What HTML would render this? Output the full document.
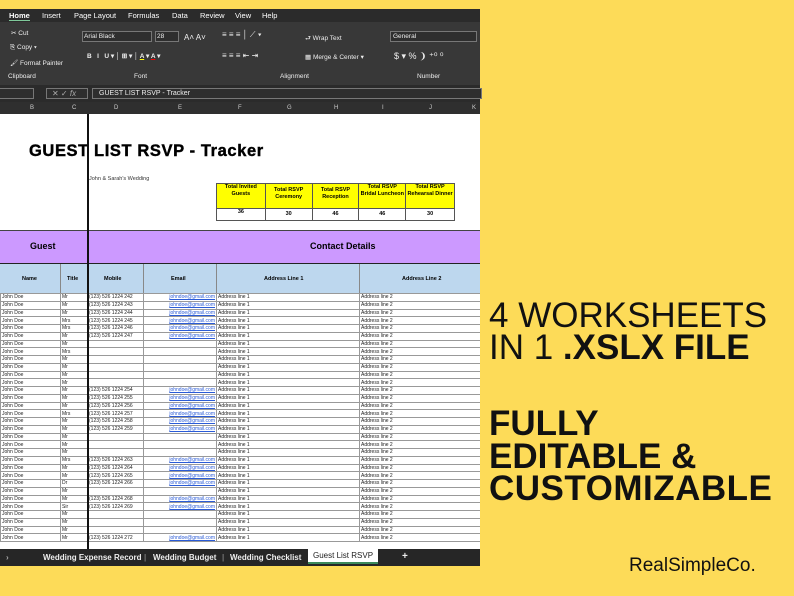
<!DOCTYPE html>
<html><head><meta charset="utf-8"><style>
*{margin:0;padding:0;box-sizing:border-box}
body{width:794px;height:596px;background:#fddb58;position:relative;overflow:hidden;font-family:"Liberation Sans",Arial,sans-serif}
.a{position:absolute}
.tabs{left:0;top:9px;width:480px;height:13px;background:#2b2b2b;color:#fff;font-size:7.5px}
.tabs span{position:absolute;top:2px}
.rib{left:0;top:22px;width:480px;height:63px;background:#383838;color:#eee;font-size:6.5px}
.rib span{position:absolute;white-space:nowrap}
.box{position:absolute;border:1px solid #777;background:#2e2e2e;height:11px}
.fb{left:0;top:85px;width:480px;height:17px;background:#2b2b2b}
.ch{left:0;top:102px;width:480px;height:12px;background:#2f2f2f;color:#ccc;font-size:6px}
.ch span{position:absolute;top:3px}
.sheet{left:0;top:114px;width:480px;height:435px;background:#fff;overflow:hidden}
table{border-collapse:collapse;table-layout:fixed;position:absolute;left:0;top:179px;width:480px}
td{border:1px solid #999;height:7.75px;font-size:5px;line-height:6px;padding:0 1px;white-space:nowrap;overflow:hidden;color:#222}
td.e{color:#2a5bd7;text-decoration:underline;text-align:right}
.st{left:0;top:549px;width:480px;height:17px;background:#262626;color:#eee;font-size:8px;font-weight:bold}
.st span{position:absolute;top:4px;white-space:nowrap}
.big{left:489px;font-size:35px;color:#111;line-height:33px;white-space:nowrap;letter-spacing:0}
</style></head><body>
<div class="a tabs"><span style="left:9px;border-bottom:1px solid #7fc99a;font-weight:bold">Home</span><span style="left:42px">Insert</span><span style="left:74px">Page Layout</span><span style="left:128px">Formulas</span><span style="left:172px">Data</span><span style="left:200px">Review</span><span style="left:235px">View</span><span style="left:262px">Help</span></div>
<div class="a rib">
<span style="left:11px;top:7px">✂ Cut</span><span style="left:10px;top:22px">⎘ Copy ▾</span><span style="left:10px;top:37px">🖌 Format Painter</span><span style="left:8px;top:51px">Clipboard</span>
<div class="box" style="left:82px;top:9px;width:70px"></div><span style="left:84px;top:11px">Arial Black</span><div class="box" style="left:155px;top:9px;width:24px"></div><span style="left:157px;top:11px">28</span><span style="left:184px;top:11px;font-size:8px">A˄ A˅</span>
<span style="left:87px;top:30px;font-weight:bold">B &nbsp; I &nbsp; U ▾ │ ⊞ ▾ │ <u style="text-decoration-color:#ff0">A</u> ▾ <u style="text-decoration-color:#e00">A</u> ▾</span><span style="left:134px;top:51px">Font</span>
<span style="left:222px;top:8px;font-size:8px">≡ ≡ ≡ │ ⟋ ▾</span><span style="left:222px;top:29px;font-size:8px">≡ ≡ ≡ ⇤ ⇥</span>
<span style="left:305px;top:12px">⮐ Wrap Text</span><span style="left:305px;top:31px">▦ Merge &amp; Center ▾</span><span style="left:280px;top:51px">Alignment</span>
<div class="box" style="left:390px;top:9px;width:87px"></div><span style="left:393px;top:11px">General</span><span style="left:394px;top:29px;font-size:9px">$ ▾ % ❩ ⁺⁰ ⁰</span><span style="left:417px;top:51px">Number</span>
</div>
<div class="a fb"><div class="box" style="left:-2px;top:3px;width:36px"></div><div class="box" style="left:46px;top:3px;width:42px"></div><span class="a" style="left:52px;top:4px;color:#aaa;font-size:8px">✕ ✓ <i>fx</i></span><div class="box" style="left:92px;top:3px;width:390px"></div><span class="a" style="left:99px;top:5px;color:#eee;font-size:7px">GUEST LIST RSVP - Tracker</span></div>
<div class="a ch"><span style="left:30px">B</span><span style="left:72px">C</span><span style="left:114px">D</span><span style="left:178px">E</span><span style="left:238px">F</span><span style="left:287px">G</span><span style="left:334px">H</span><span style="left:382px">I</span><span style="left:429px">J</span><span style="left:472px">K</span></div>
<div class="a sheet">
<div class="a" style="left:29px;top:28px;font-size:16.5px;font-weight:900;color:#000;letter-spacing:.6px;-webkit-text-stroke:0.4px #000">GUEST LIST RSVP - Tracker</div>
<div class="a" style="left:89px;top:62px;font-size:5.5px;color:#333">John &amp; Sarah's Wedding</div>
<div class="a" style="left:216px;top:69px;width:239px;height:38px;border:1px solid #555;display:flex;font-size:5.5px;font-weight:bold;text-align:center;line-height:7px">
<div style="flex:49;border-right:1px solid #555"><div style="background:#ffff00;height:25px;border-bottom:1px solid #555">Total Invited Guests</div><div>36</div></div>
<div style="flex:47;border-right:1px solid #555"><div style="background:#ffff00;height:25px;border-bottom:1px solid #555;padding-top:3px">Total RSVP Ceremony</div><div style="padding-top:2px">30</div></div>
<div style="flex:47;border-right:1px solid #555"><div style="background:#ffff00;height:25px;border-bottom:1px solid #555;padding-top:3px">Total RSVP Reception</div><div style="padding-top:2px">46</div></div>
<div style="flex:47;border-right:1px solid #555"><div style="background:#ffff00;height:25px;border-bottom:1px solid #555">Total RSVP Bridal Luncheon</div><div style="padding-top:2px">46</div></div>
<div style="flex:49"><div style="background:#ffff00;height:25px;border-bottom:1px solid #555">Total RSVP Rehearsal Dinner</div><div style="padding-top:2px">30</div></div>
</div>
<div class="a" style="left:0;top:116px;width:480px;height:34px;background:#cc99ff;border-top:1px solid #444;border-bottom:1px solid #222"></div>
<div class="a" style="left:30px;top:127px;font-size:9px;font-weight:900">Guest</div>
<div class="a" style="left:310px;top:127px;font-size:9px;font-weight:900">Contact Details</div>
<div class="a" style="left:0;top:150px;width:480px;height:29px;background:#bdd7ee;font-size:5.5px;font-weight:bold">
<span class="a" style="left:22px;top:12px">Name</span><span class="a" style="left:67px;top:12px">Title</span><span class="a" style="left:104px;top:12px">Mobile</span><span class="a" style="left:171px;top:12px">Email</span><span class="a" style="left:264px;top:12px">Address Line 1</span><span class="a" style="left:402px;top:12px">Address Line 2</span>
<div class="a" style="left:60px;top:0;width:1px;height:29px;background:#888"></div><div class="a" style="left:143px;top:0;width:1px;height:29px;background:#888"></div><div class="a" style="left:216px;top:0;width:1px;height:29px;background:#888"></div><div class="a" style="left:359px;top:0;width:1px;height:29px;background:#888"></div></div>
<table>
<colgroup><col style="width:60px"><col style="width:27px"><col style="width:56px"><col style="width:73px"><col style="width:143px"><col style="width:121px"></colgroup>
<tr><td>John Doe</td><td>Mr</td><td>(123) 526 1224 242</td><td class="e">johndoe@gmail.com</td><td>Address line 1</td><td>Address line 2</td></tr>
<tr><td>John Doe</td><td>Mr</td><td>(123) 526 1224 243</td><td class="e">johndoe@gmail.com</td><td>Address line 1</td><td>Address line 2</td></tr>
<tr><td>John Doe</td><td>Mr</td><td>(123) 526 1224 244</td><td class="e">johndoe@gmail.com</td><td>Address line 1</td><td>Address line 2</td></tr>
<tr><td>John Doe</td><td>Mrs</td><td>(123) 526 1224 245</td><td class="e">johndoe@gmail.com</td><td>Address line 1</td><td>Address line 2</td></tr>
<tr><td>John Doe</td><td>Mrs</td><td>(123) 526 1224 246</td><td class="e">johndoe@gmail.com</td><td>Address line 1</td><td>Address line 2</td></tr>
<tr><td>John Doe</td><td>Mr</td><td>(123) 526 1224 247</td><td class="e">johndoe@gmail.com</td><td>Address line 1</td><td>Address line 2</td></tr>
<tr><td>John Doe</td><td>Mr</td><td></td><td></td><td>Address line 1</td><td>Address line 2</td></tr>
<tr><td>John Doe</td><td>Mrs</td><td></td><td></td><td>Address line 1</td><td>Address line 2</td></tr>
<tr><td>John Doe</td><td>Mr</td><td></td><td></td><td>Address line 1</td><td>Address line 2</td></tr>
<tr><td>John Doe</td><td>Mr</td><td></td><td></td><td>Address line 1</td><td>Address line 2</td></tr>
<tr><td>John Doe</td><td>Mr</td><td></td><td></td><td>Address line 1</td><td>Address line 2</td></tr>
<tr><td>John Doe</td><td>Mr</td><td></td><td></td><td>Address line 1</td><td>Address line 2</td></tr>
<tr><td>John Doe</td><td>Mr</td><td>(123) 526 1224 254</td><td class="e">johndoe@gmail.com</td><td>Address line 1</td><td>Address line 2</td></tr>
<tr><td>John Doe</td><td>Mr</td><td>(123) 526 1224 255</td><td class="e">johndoe@gmail.com</td><td>Address line 1</td><td>Address line 2</td></tr>
<tr><td>John Doe</td><td>Mr</td><td>(123) 526 1224 256</td><td class="e">johndoe@gmail.com</td><td>Address line 1</td><td>Address line 2</td></tr>
<tr><td>John Doe</td><td>Mrs</td><td>(123) 526 1224 257</td><td class="e">johndoe@gmail.com</td><td>Address line 1</td><td>Address line 2</td></tr>
<tr><td>John Doe</td><td>Mr</td><td>(123) 526 1224 258</td><td class="e">johndoe@gmail.com</td><td>Address line 1</td><td>Address line 2</td></tr>
<tr><td>John Doe</td><td>Mr</td><td>(123) 526 1224 259</td><td class="e">johndoe@gmail.com</td><td>Address line 1</td><td>Address line 2</td></tr>
<tr><td>John Doe</td><td>Mr</td><td></td><td></td><td>Address line 1</td><td>Address line 2</td></tr>
<tr><td>John Doe</td><td>Mr</td><td></td><td></td><td>Address line 1</td><td>Address line 2</td></tr>
<tr><td>John Doe</td><td>Mr</td><td></td><td></td><td>Address line 1</td><td>Address line 2</td></tr>
<tr><td>John Doe</td><td>Mrs</td><td>(123) 526 1224 263</td><td class="e">johndoe@gmail.com</td><td>Address line 1</td><td>Address line 2</td></tr>
<tr><td>John Doe</td><td>Mr</td><td>(123) 526 1224 264</td><td class="e">johndoe@gmail.com</td><td>Address line 1</td><td>Address line 2</td></tr>
<tr><td>John Doe</td><td>Mr</td><td>(123) 526 1224 265</td><td class="e">johndoe@gmail.com</td><td>Address line 1</td><td>Address line 2</td></tr>
<tr><td>John Doe</td><td>Dr</td><td>(123) 526 1224 266</td><td class="e">johndoe@gmail.com</td><td>Address line 1</td><td>Address line 2</td></tr>
<tr><td>John Doe</td><td>Mr</td><td></td><td></td><td>Address line 1</td><td>Address line 2</td></tr>
<tr><td>John Doe</td><td>Mr</td><td>(123) 526 1224 268</td><td class="e">johndoe@gmail.com</td><td>Address line 1</td><td>Address line 2</td></tr>
<tr><td>John Doe</td><td>Sir</td><td>(123) 526 1224 269</td><td class="e">johndoe@gmail.com</td><td>Address line 1</td><td>Address line 2</td></tr>
<tr><td>John Doe</td><td>Mr</td><td></td><td></td><td>Address line 1</td><td>Address line 2</td></tr>
<tr><td>John Doe</td><td>Mr</td><td></td><td></td><td>Address line 1</td><td>Address line 2</td></tr>
<tr><td>John Doe</td><td>Mr</td><td></td><td></td><td>Address line 1</td><td>Address line 2</td></tr>
<tr><td>John Doe</td><td>Mr</td><td>(123) 526 1224 272</td><td class="e">johndoe@gmail.com</td><td>Address line 1</td><td>Address line 2</td></tr>
</table>
<div class="a" style="left:87px;top:0;width:2px;height:435px;background:#111"></div>
</div>
<div class="a st"><span style="left:6px;color:#aaa">›</span><span style="left:43px">Wedding Expense Record</span><span style="left:144px;color:#777">|</span><span style="left:153px">Wedding Budget</span><span style="left:222px;color:#777">|</span><span style="left:230px">Wedding Checklist</span><div class="a" style="left:308px;top:0;width:70px;height:15px;background:#fff;border-bottom:2px solid #3c8a5a"></div><span style="left:313px;top:2px;color:#222;font-weight:normal">Guest List RSVP</span><span style="left:402px;font-size:10px;top:2px">+</span></div>
<div class="a big" style="top:299px">4 WORKSHEETS</div>
<div class="a big" style="top:331px">IN 1 <b>.XSLX FILE</b></div>
<div class="a big" style="top:407px;font-weight:bold">FULLY</div>
<div class="a big" style="top:440px;font-weight:bold">EDITABLE &amp;</div>
<div class="a big" style="top:472px;font-weight:bold;letter-spacing:.5px">CUSTOMIZABLE</div>
<div class="a" style="left:629px;top:555px;font-size:19px;color:#111">RealSimpleCo.</div>
</body></html>
